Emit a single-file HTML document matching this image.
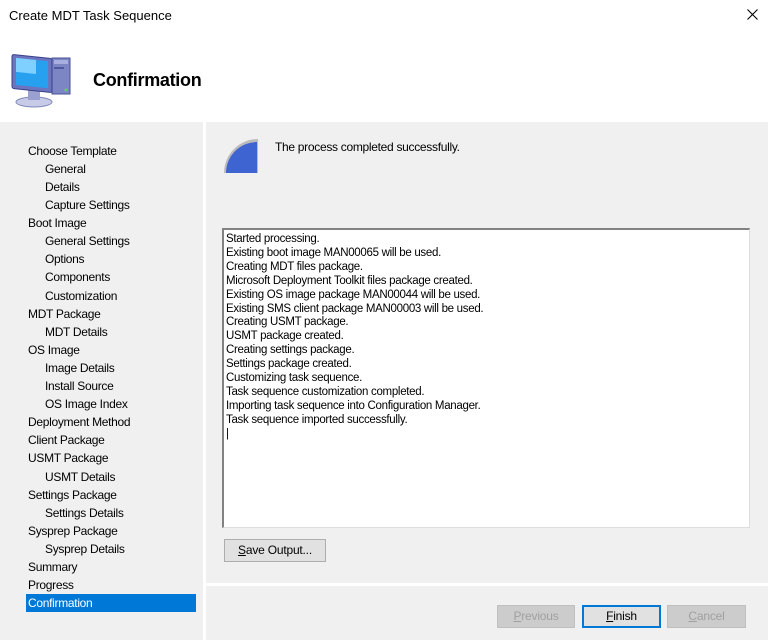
<!DOCTYPE html>
<html><head><style>
body{margin:0;width:768px;height:640px;position:relative;background:#fff;font-family:"Liberation Sans",sans-serif;overflow:hidden;color:#000}
.a{position:absolute}
.nav div{position:absolute;font-size:12px;line-height:18px;white-space:nowrap;letter-spacing:-0.3px}
.btn{position:absolute;height:21px;border:1px solid #adadad;background:#e1e1e1;font-size:12px;text-align:center;line-height:21px;box-sizing:border-box;letter-spacing:-0.2px}
.log{font-size:11.5px;line-height:13.9px;letter-spacing:-0.3px}
</style></head><body>
<div class="a" style="left:9px;top:8px;font-size:13px">Create MDT Task Sequence</div>
<svg class="a" style="left:747px;top:9px" width="11" height="11" viewBox="0 0 11 11"><path d="M0.5 0.5L10.5 10.5M10.5 0.5L0.5 10.5" stroke="#000" stroke-width="1.1"/></svg>
<svg class="a" style="left:8px;top:48px" width="64" height="62" viewBox="0 0 64 62">
<rect x="44" y="10" width="18" height="36" fill="#7d86c4" stroke="#4a5090"/>
<rect x="46" y="12" width="14" height="4" fill="#a8afe0"/>
<rect x="46" y="19" width="10" height="2" fill="#5058a0"/>
<circle cx="58" cy="42" r="1.5" fill="#6c6"/>
<ellipse cx="26" cy="54" rx="18" ry="5" fill="#c8cbe8" stroke="#8088b8"/>
<rect x="20" y="40" width="12" height="12" fill="#9aa0d0"/>
<rect x="4" y="6" width="40" height="34" rx="2" fill="#6b74bf" stroke="#39408a" transform="skewY(6)"/>
<rect x="8" y="9" width="32" height="27" fill="#28a0f0" transform="skewY(6)"/>
<rect x="8" y="9" width="20" height="14" fill="#7fd0ff" transform="skewY(6)"/>
</svg>
<div class="a" style="left:93px;top:70px;font-size:18px;font-weight:bold;letter-spacing:-0.3px">Confirmation</div>
<div class="a" style="left:0;top:122px;width:203px;height:518px;background:#f0f0f0"></div>
<div class="a" style="left:206px;top:122px;width:562px;height:461px;background:#f0f0f0"></div>
<div class="a" style="left:206px;top:586px;width:562px;height:54px;background:#f0f0f0"></div>
<div class="nav">
<div style="left:28px;top:142px">Choose Template</div>
<div style="left:45px;top:160px">General</div>
<div style="left:45px;top:178px">Details</div>
<div style="left:45px;top:196px">Capture Settings</div>
<div style="left:28px;top:214px">Boot Image</div>
<div style="left:45px;top:232px">General Settings</div>
<div style="left:45px;top:250px">Options</div>
<div style="left:45px;top:268px">Components</div>
<div style="left:45px;top:287px">Customization</div>
<div style="left:28px;top:305px">MDT Package</div>
<div style="left:45px;top:323px">MDT Details</div>
<div style="left:28px;top:341px">OS Image</div>
<div style="left:45px;top:359px">Image Details</div>
<div style="left:45px;top:377px">Install Source</div>
<div style="left:45px;top:395px">OS Image Index</div>
<div style="left:28px;top:413px">Deployment Method</div>
<div style="left:28px;top:431px">Client Package</div>
<div style="left:28px;top:449px">USMT Package</div>
<div style="left:45px;top:468px">USMT Details</div>
<div style="left:28px;top:486px">Settings Package</div>
<div style="left:45px;top:504px">Settings Details</div>
<div style="left:28px;top:522px">Sysprep Package</div>
<div style="left:45px;top:540px">Sysprep Details</div>
<div style="left:28px;top:558px">Summary</div>
<div style="left:28px;top:576px">Progress</div>
<div style="left:26px;top:594px;width:168px;padding-left:2px;background:#0078d7;color:#fff">Confirmation</div>
</div>
<svg class="a" style="left:222px;top:138px" width="40" height="36" viewBox="0 0 40 36">
<path d="M2 35 A34 34 0 0 1 36 1 L36 35 Z" fill="#bbb"/>
<path d="M4 35 A31 31 0 0 1 35 4 L35 35 Z" fill="#3d64d0"/>
</svg>
<div class="a" style="left:275px;top:140px;font-size:12px;letter-spacing:-0.3px">The process completed successfully.</div>
<div class="a log" style="left:222px;top:228px;width:528px;height:300px;background:#fff;border-top:2px solid #828282;border-left:2px solid #828282;border-right:1px solid #ddd;border-bottom:1px solid #ddd;box-sizing:border-box;padding:3px 2px">
Started processing.<br>Existing boot image MAN00065 will be used.<br>Creating MDT files package.<br>Microsoft Deployment Toolkit files package created.<br>Existing OS image package MAN00044 will be used.<br>Existing SMS client package MAN00003 will be used.<br>Creating USMT package.<br>USMT package created.<br>Creating settings package.<br>Settings package created.<br>Customizing task sequence.<br>Task sequence customization completed.<br>Importing task sequence into Configuration Manager.<br>Task sequence imported successfully.<br>|
</div>
<div class="btn" style="left:224px;top:539px;width:102px;height:23px;line-height:21px"><u>S</u>ave Output...</div>
<div class="btn" style="left:497px;top:605px;width:78px;height:23px;color:#a0a0a0;background:#ccc;border-color:#bfbfbf"><u>P</u>revious</div>
<div class="btn" style="left:582px;top:605px;width:79px;height:23px;border:2px solid #0078d7;line-height:19px"><u>F</u>inish</div>
<div class="btn" style="left:667px;top:605px;width:79px;height:23px;color:#a0a0a0;background:#ccc;border-color:#bfbfbf"><u>C</u>ancel</div>
</body></html>
